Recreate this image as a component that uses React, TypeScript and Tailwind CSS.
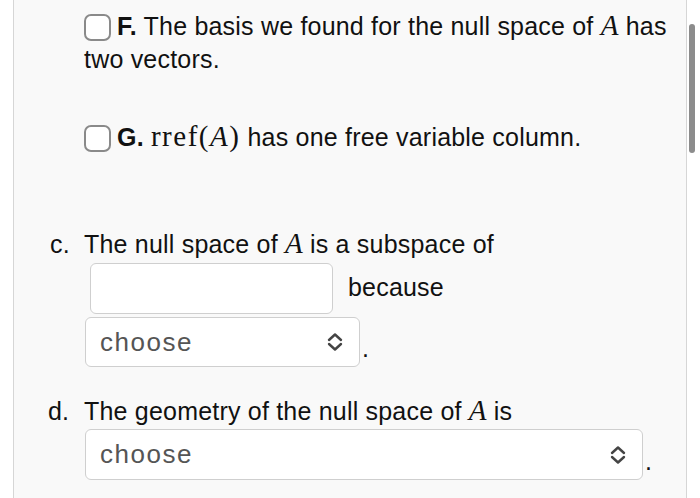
import React from "react";

const Chevron = () => (
  <svg width="18" height="20" viewBox="0 0 18 20" fill="none" stroke="#444" strokeWidth="2.4" strokeLinecap="round" strokeLinejoin="round">
    <path d="M3 8 L9 2.5 L15 8" />
    <path d="M3 12 L9 17.5 L15 12" />
  </svg>
);

const Box = () => (
  <span className="inline-block w-[27px] h-[27px] rounded-[7px] border-2 border-[#8a8a8a] bg-white align-[-6px] mr-[6px]" />
);

const MathA = () => (
  <span className="italic text-[29px] leading-none" style={{ fontFamily: '"Liberation Serif", "DejaVu Serif", serif' }}>A</span>
);

export default function App() {
  return (
    <div className="relative w-[700px] h-[498px] bg-white overflow-hidden text-[#111]" style={{ fontFamily: '"Liberation Sans", Arial, sans-serif' }}>
      <div className="ml-[13px] w-[674px] h-[498px] border-l border-r border-[#d6d6d6] bg-[#f9f9f9] text-[25px] leading-[33px] tracking-[0.2px]">
        <div className="pl-[70px] pr-[14px] pt-[10px]">
          <div>
            <Box />
            <b>F.</b> The basis we found for the null space of <MathA /> has two vectors.
          </div>
          <div className="mt-[44px]">
            <Box />
            <b>G.</b>{" "}
            <span className="text-[29px] tracking-[1.5px]" style={{ fontFamily: '"Liberation Serif", "DejaVu Serif", serif' }}>
              rref(<span className="italic">A</span>)
            </span>{" "}
            has one free variable column.
          </div>
        </div>

        <div className="mt-[74px] flex">
          <div className="w-[70px] pl-[36px]">c.</div>
          <div className="flex-1">
            <div>
              The null space of <MathA /> is a subspace of
            </div>
            <div className="flex items-center mt-[2px]">
              <div className="ml-[6px] w-[243px] h-[51px] rounded-[6px] border border-[#cfcfcf] bg-white" />
              <span className="ml-[15px] mt-[-2px]">because</span>
            </div>
            <div className="flex items-end mt-[3px]">
              <div className="ml-[1px] w-[275px] h-[50px] rounded-[6px] border border-[#cfcfcf] bg-white flex items-center justify-between pl-[14px] pr-[15px]">
                <span className="text-[#555] text-[26px] tracking-[1.5px]">choose</span>
                <Chevron />
              </div>
              <span className="ml-[2px] mb-[6px] leading-none">.</span>
            </div>
          </div>
        </div>

        <div className="mt-[28px] flex">
          <div className="w-[70px] pl-[34px]">d.</div>
          <div className="flex-1">
            <div>
              The geometry of the null space of <MathA /> is
            </div>
            <div className="flex items-end mt-[1px]">
              <div className="ml-[1px] w-[558px] h-[51px] rounded-[6px] border border-[#cfcfcf] bg-white flex items-center justify-between pl-[14px] pr-[15px]">
                <span className="text-[#555] text-[26px] tracking-[1.5px]">choose</span>
                <Chevron />
              </div>
              <span className="ml-[2px] mb-[6px] leading-none">.</span>
            </div>
          </div>
        </div>
      </div>
      <div className="absolute left-[689px] top-[24px] w-[6px] h-[129px] rounded-full bg-[#8c8c8c]" />
    </div>
  );
}
